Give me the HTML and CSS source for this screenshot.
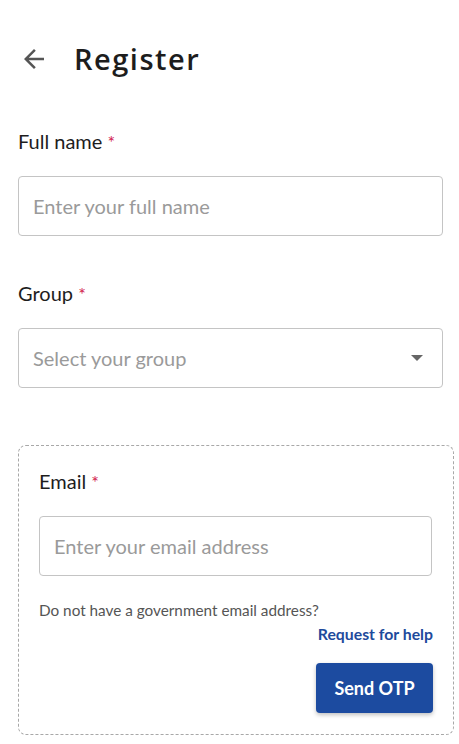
FILE: index.html
```html
<!DOCTYPE html>
<html lang="en">
<head>
<meta charset="utf-8">
<title>Register</title>
<link rel="stylesheet" href="styles.css">
</head>
<body>
<div class="page">
  <header class="header">
    <button class="back" aria-label="Back">
      <svg width="30" height="30" viewBox="0 0 24 24"><path d="M20 11H7.83l5.59-5.59L12 4l-8 8 8 8 1.41-1.41L7.83 13H20v-2z" fill="#555"/></svg>
    </button>
    <h1 class="title">Register</h1>
  </header>

  <div class="field">
    <label class="label">Full name <span class="req">*</span></label>
    <div class="input"><span class="ph">Enter your full name</span></div>
  </div>

  <div class="field">
    <label class="label">Group <span class="req">*</span></label>
    <div class="input select"><span class="ph">Select your group</span><span class="caret"></span></div>
  </div>

  <div class="box">
    <div class="field">
      <label class="label">Email <span class="req">*</span></label>
      <div class="input"><span class="ph">Enter your email address</span></div>
    </div>
    <p class="note">Do not have a government email address?</p>
    <div class="help-row"><a class="help">Request for help</a></div>
    <div class="btn-row"><button class="btn">Send OTP</button></div>
  </div>
</div>
</body>
</html>
```
FILE: styles.css
```css
* { box-sizing: border-box; }
html, body { margin: 0; padding: 0; background: #fff; }
body { font-family: Lato, "Open Sans", sans-serif; color: #1a1a1a; }
.page { padding: 0 16px 0 18px; width: 459px; }
.header { display: flex; align-items: center; height: 117px; }
.back { border: 0; background: none; padding: 0; margin-left: 1px; width: 30px; height: 30px; display: flex; align-items: center; justify-content: center; }
.back svg { display: block; }
.title { margin: 0 0 0 25px; font-family: "Open Sans", sans-serif; font-weight: 600; font-size: 29px; color: #1d1d1d; letter-spacing: 1.5px; }
.field { display: flex; flex-direction: column; }
.field + .field { margin-top: 33px; }
.label { font-size: 20px; line-height: 24px; color: #1d1d1d; margin: 12px 0 22px; }
.req { color: #d2214e; font-size: 18px; }
.input { height: 60px; border: 1px solid #c4c4c4; border-radius: 4px; display: flex; align-items: center; padding: 0 14px; width: 425px; }
.ph { font-size: 20px; color: #9a9a9a; }
.select { justify-content: space-between; padding-right: 19px; }
.caret { width: 0; height: 0; border-left: 6px solid transparent; border-right: 6px solid transparent; border-top: 6px solid #666; }
.box { margin-top: 57px; border: 1px dashed #a8a8a8; border-radius: 8px; width: 436px; padding: 11px 20px 21px 20px; }
.box .input { width: 393px; }
.note { margin: 25px 0 0; font-size: 15.3px; color: #555; line-height: 18px; }
.help-row { display: flex; justify-content: flex-end; margin-top: 6px; }
.help { font-size: 15.8px; font-weight: 700; color: #1e4a9c; line-height: 18px; }
.btn-row { display: flex; justify-content: flex-end; margin-top: 20px; }
.btn { width: 117px; height: 50px; border: 0; border-radius: 4px; background: #1c4ba0; color: #fff; font-family: Lato, sans-serif; font-weight: 700; font-size: 18px; box-shadow: 0 2px 4px rgba(0,0,0,0.25); }
```
